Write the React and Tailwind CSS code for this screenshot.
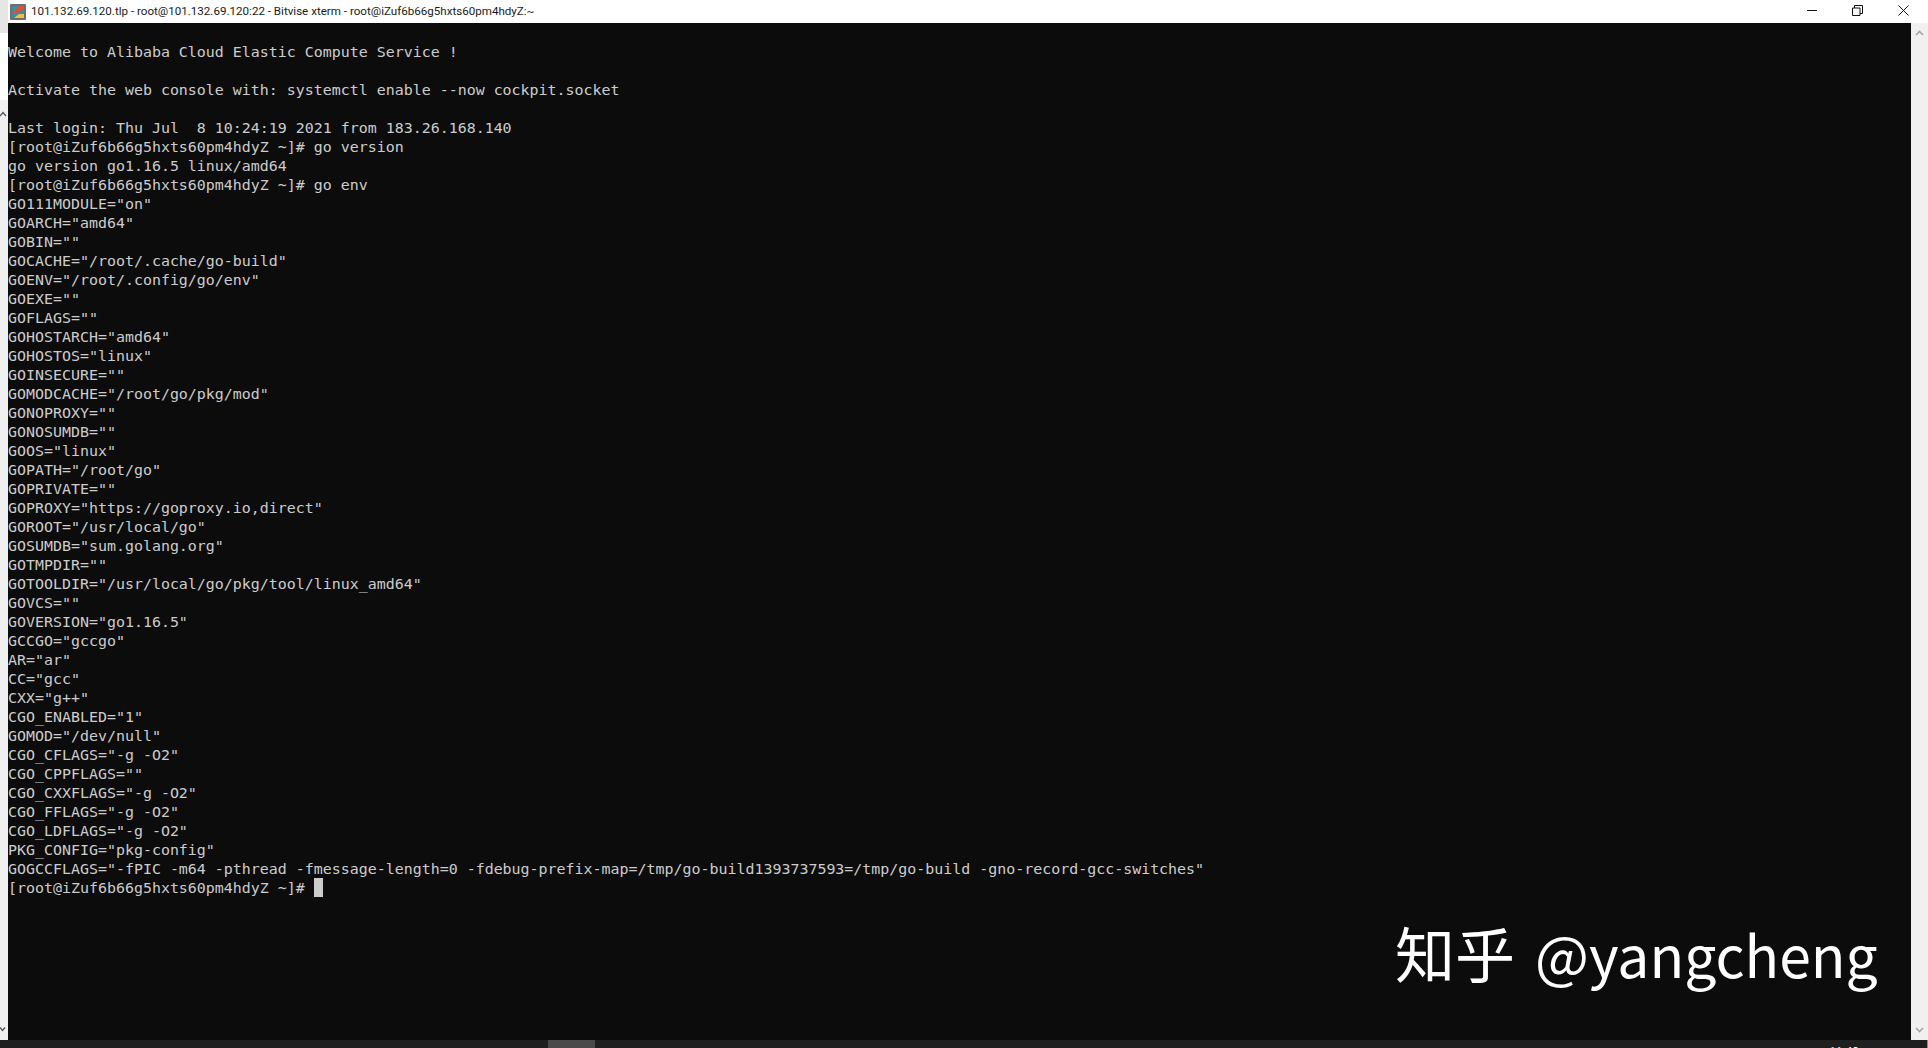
const LINES = [
  "",
  "Welcome to Alibaba Cloud Elastic Compute Service !",
  "",
  "Activate the web console with: systemctl enable --now cockpit.socket",
  "",
  "Last login: Thu Jul  8 10:24:19 2021 from 183.26.168.140",
  "[root@iZuf6b66g5hxts60pm4hdyZ ~]# go version",
  "go version go1.16.5 linux/amd64",
  "[root@iZuf6b66g5hxts60pm4hdyZ ~]# go env",
  'GO111MODULE="on"',
  'GOARCH="amd64"',
  'GOBIN=""',
  'GOCACHE="/root/.cache/go-build"',
  'GOENV="/root/.config/go/env"',
  'GOEXE=""',
  'GOFLAGS=""',
  'GOHOSTARCH="amd64"',
  'GOHOSTOS="linux"',
  'GOINSECURE=""',
  'GOMODCACHE="/root/go/pkg/mod"',
  'GONOPROXY=""',
  'GONOSUMDB=""',
  'GOOS="linux"',
  'GOPATH="/root/go"',
  'GOPRIVATE=""',
  'GOPROXY="https://goproxy.io,direct"',
  'GOROOT="/usr/local/go"',
  'GOSUMDB="sum.golang.org"',
  'GOTMPDIR=""',
  'GOTOOLDIR="/usr/local/go/pkg/tool/linux_amd64"',
  'GOVCS=""',
  'GOVERSION="go1.16.5"',
  'GCCGO="gccgo"',
  'AR="ar"',
  'CC="gcc"',
  'CXX="g++"',
  'CGO_ENABLED="1"',
  'GOMOD="/dev/null"',
  'CGO_CFLAGS="-g -O2"',
  'CGO_CPPFLAGS=""',
  'CGO_CXXFLAGS="-g -O2"',
  'CGO_FFLAGS="-g -O2"',
  'CGO_LDFLAGS="-g -O2"',
  'PKG_CONFIG="pkg-config"',
  'GOGCCFLAGS="-fPIC -m64 -pthread -fmessage-length=0 -fdebug-prefix-map=/tmp/go-build1393737593=/tmp/go-build -gno-record-gcc-switches"',
];

function AppIcon() {
  return (
    <svg width="16" height="16" viewBox="0 0 16 16" className="shrink-0 ml-[2px]">
      <rect x="0" y="0" width="16" height="16" rx="1" fill="#6e6e6e" />
      <rect x="2" y="2" width="12" height="12" fill="#3a8fa8" />
      <path d="M2 9L9 2h5v3L6 10z" fill="#d9533c" />
      <path d="M4 14l5-4h5v4z" fill="#e6c14a" />
    </svg>
  );
}

export default function App() {
  return (
    <div className="w-[1928px] h-[1048px] overflow-hidden flex flex-col bg-[#0c0c0c]">
      <div className="flex flex-1 min-h-0">
        <div className="w-2 flex flex-col shrink-0">
          <div className="h-[33px] bg-[#e6e6e6]" />
          <div className="h-[67px] bg-white" />
          <div className="flex-1 bg-[#f0f0f0] flex flex-col justify-between pt-[11px] pb-[8px]">
            <svg width="8" height="6" viewBox="0 0 8 6"><path d="M0 5l3-3.5L6 5" fill="none" stroke="#555" strokeWidth="1.4" /></svg>
            <svg width="8" height="6" viewBox="0 0 8 6"><path d="M0 1.5l2.5 3L5 1.5" fill="none" stroke="#555" strokeWidth="1.4" /></svg>
          </div>
        </div>
        <div className="flex-1 min-w-0 flex flex-col">
          <div className="h-[23px] bg-white flex items-center shrink-0">
            <AppIcon />
            <span className="ml-[5px] text-[11.6px] text-[#1a1a1a] font-['Roboto',sans-serif] whitespace-nowrap">
              101.132.69.120.tlp - root@101.132.69.120:22 - Bitvise xterm - root@iZuf6b66g5hxts60pm4hdyZ:~
            </span>
            <div className="ml-auto flex items-center h-full pb-[3px]">
              <svg width="11" height="11" viewBox="0 0 11 11" className="mr-[34px]"><path d="M0 5.5h10" stroke="#111" strokeWidth="1" /></svg>
              <svg width="11" height="11" viewBox="0 0 11 11" className="mr-[35px]"><path d="M0.5 3h7.5v7.5h-7.5zM2.5 3v-2.5h8v8h-2.5" fill="none" stroke="#111" strokeWidth="1" /></svg>
              <svg width="11" height="11" viewBox="0 0 11 11" className="mr-[19px]"><path d="M0.5 0.5l10 10M10.5 0.5l-10 10" stroke="#111" strokeWidth="1" /></svg>
            </div>
          </div>
          <div className="flex flex-1 min-h-0">
            <div className="relative flex-1 min-w-0 bg-[#0c0c0c]">
              <div className="pt-px font-['DejaVu_Sans_Mono',monospace] text-[14.95px] leading-[19px] text-[#cccccc] whitespace-pre">
                {LINES.map((line, i) => (
                  <div key={i} className="h-[19px]">{line}</div>
                ))}
                <div className="h-[19px] flex">
                  <span>{"[root@iZuf6b66g5hxts60pm4hdyZ ~]# "}</span>
                  <span className="w-[9px] h-[19px] -mt-px bg-[#cccccc]" />
                </div>
              </div>
              <div className="absolute left-[1387px] top-[894px] flex items-baseline text-white font-['Noto_Sans_CJK_SC',sans-serif] leading-[70px] whitespace-pre">
                <span className="text-[60px]">知乎</span>
                <span className="ml-[20px] text-[57px]">@yangcheng</span>
              </div>
            </div>
            <div className="w-[17px] bg-[#f0f0f0] shrink-0 flex flex-col items-center justify-between py-[7px]">
              <svg width="9" height="6" viewBox="0 0 9 6"><path d="M1 5l3.5-3.5L8 5" fill="none" stroke="#a6a6a6" strokeWidth="1.6" /></svg>
              <svg width="9" height="6" viewBox="0 0 9 6"><path d="M1 1l3.5 3.5L8 1" fill="none" stroke="#a6a6a6" strokeWidth="1.6" /></svg>
            </div>
          </div>
        </div>
      </div>
      <div className="h-2 bg-[#1f1f1f] shrink-0 flex overflow-hidden">
        <div className="ml-[548px] w-12 h-full bg-[#4a4a4a]" />
        <span className="ml-[1234px] mt-[5px] text-[12px] leading-[14px] text-white font-['Roboto',sans-serif]">11:49</span>
        <div className="ml-[68px] w-px h-full bg-[#8a8a8a]" />
      </div>
    </div>
  );
}
